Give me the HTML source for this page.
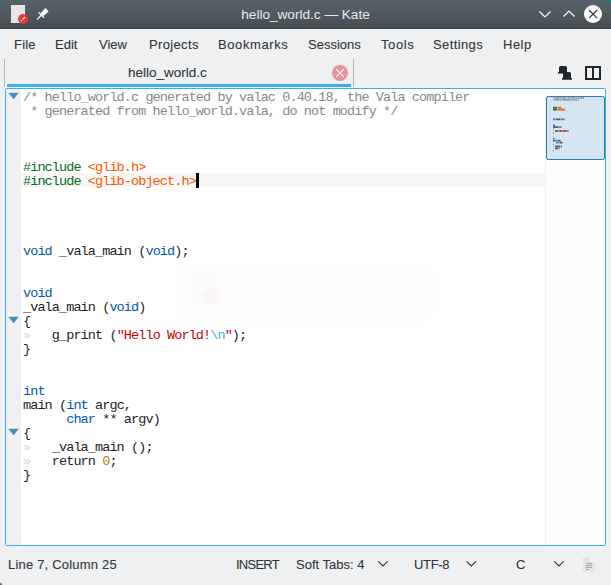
<!DOCTYPE html>
<html><head><meta charset="utf-8">
<style>
*{margin:0;padding:0;box-sizing:border-box}
html,body{width:611px;height:585px;overflow:hidden;background:#eff0f1;font-family:"Liberation Sans",sans-serif;position:relative}
.abs{position:absolute}
#title{left:0;top:0;width:611px;height:29px;background:linear-gradient(#57626a,#505a61 45%,#485157 85%,#464e54);border-bottom:1px solid #3c444a}
#hl{left:0;top:29px;width:611px;height:1px;background:#fafbfb}
#ttext{left:0;top:1px;width:611px;height:28px;line-height:28px;text-align:center;color:#e8eaeb;font-size:13.6px}
.menu{top:30px;height:30px;line-height:30px;font-size:13px;color:#31363b;-webkit-text-stroke:0.1px #31363b}
#tabtext{left:128px;top:60px;height:24px;line-height:26px;font-size:13.5px;color:#31363b;-webkit-text-stroke:0.1px #31363b}
#frame{left:5px;top:88px;width:601px;height:458px;border:1px solid #3daee9;border-radius:2px;background:#fff;overflow:hidden}
#gutter{left:0;top:0;width:15px;height:456px;background:#eff0f1}
#code{left:17px;top:1.5px;font-family:"Liberation Mono",monospace;font-size:13.5px;letter-spacing:-0.9px;line-height:14px;color:#1f1c1b;white-space:pre}
.ln{height:14px}
.cm{color:#898887}.pp{color:#006e28}.inc{color:#ff5500}.ty{color:#0057ae}.st{color:#bf0303}.sc{color:#3daee9}.dv{color:#b08000}.tb{color:#d4d4d4}
#curline{left:15px;top:84px;width:524px;height:14px;background:#f8f7f6}
#cursor{left:190px;top:84px;width:3px;height:15px;background:#000}
.fold{width:0;height:0;border-left:5px solid transparent;border-right:5px solid transparent;border-top:6px solid #2f7fb8}
#mm{left:539px;top:0;width:60px;height:456px;background:#fdfdfd;border-left:1px solid #f0f0f0}
#mmview{left:540px;top:7px;width:59px;height:64px;background:#d6e5f2;border:1px solid #2a7cbc;border-radius:2px}
.st2{top:550px;height:30px;line-height:30px;font-size:13px;color:#31363b;-webkit-text-stroke:0.1px #31363b}
</style></head><body>
<div id="title" class="abs"></div>
<div id="hl" class="abs"></div>
<div class="abs" style="left:-2.5px;top:-2.5px;width:5px;height:5px;border-radius:50%;background:radial-gradient(#0a8580 35%,rgba(10,133,128,0) 70%)"></div>
<div class="abs" style="left:608.5px;top:-2.5px;width:5px;height:5px;border-radius:50%;background:radial-gradient(#0a8580 35%,rgba(10,133,128,0) 70%)"></div>
<div id="ttext" class="abs">hello_world.c — Kate</div>
<svg class="abs" style="left:0;top:0" width="611" height="29" viewBox="0 0 611 29">
<rect x="11" y="5" width="14" height="18" fill="#e4e6e7"/>
<circle cx="23" cy="19" r="5" fill="#ec3b30"/>
<path d="M20.9 21.1 L21.6 20.4 M22.5 19.5 L24.9 17.1" stroke="#fff" stroke-width="1.3"/>
<path d="M37 19.5 L41 15.5" stroke="#fff" stroke-width="1.1"/>
<path d="M39 12.7 L43.6 17.3" stroke="#fff" stroke-width="1.3" stroke-linecap="round"/>
<path d="M40.6 13.4 L44.8 8.6 Q45.4 8 46 8.6 L48.1 10.7 Q48.7 11.3 48.1 11.9 L43.3 16.1 Z" fill="#fff"/>
<path d="M539.5 11.5 L545 17 L550.5 11.5" stroke="#fff" stroke-width="1.2" fill="none"/>
<path d="M563.5 16.5 L569 11 L574.5 16.5" stroke="#fff" stroke-width="1.2" fill="none"/>
<circle cx="593" cy="14" r="9" fill="#fcfcfc"/>
<path d="M589 10 L597.2 18.2 M597.2 10 L589 18.2" stroke="#31363b" stroke-width="1.2"/>
</svg>


<!-- menu -->
<div class="abs menu" style="left:14px;letter-spacing:0.2px">File</div>
<div class="abs menu" style="left:55px">Edit</div>
<div class="abs menu" style="left:99px">View</div>
<div class="abs menu" style="left:149px;letter-spacing:0.35px">Projects</div>
<div class="abs menu" style="left:218px;letter-spacing:0.6px">Bookmarks</div>
<div class="abs menu" style="left:308px">Sessions</div>
<div class="abs menu" style="left:381px;letter-spacing:0.6px">Tools</div>
<div class="abs menu" style="left:433px;letter-spacing:0.38px">Settings</div>
<div class="abs menu" style="left:503px;letter-spacing:0.5px">Help</div>

<!-- tabbar -->
<div class="abs" style="left:4px;top:59px;width:1px;height:28px;background:#b5b7b9"></div>
<div class="abs" style="left:353px;top:59px;width:1px;height:28px;background:#b5b7b9"></div>
<div id="tabtext" class="abs">hello_world.c</div>
<div class="abs" style="left:7px;top:84px;width:344px;height:3px;background:#3daee9"></div>
<svg class="abs" style="left:330px;top:63px" width="20" height="20" viewBox="0 0 20 20"><circle cx="10" cy="10" r="8" fill="#e4959c"/><path d="M6.2 6.2 L13.8 13.8 M13.8 6.2 L6.2 13.8" stroke="#fff" stroke-width="1.1"/></svg>
<svg class="abs" style="left:555px;top:63px" width="50" height="20" viewBox="555 63 50 20">
<path d="M559 73.6 V67.6 Q559 66 560.6 66 H565.4 Q567 66 567 67.6 V72 H564.6 Q563 72 563 73.6 Z M558 72 H563 V73.6 H558 Z M563 78.2 V73.6 Q563 72 564.6 72 H569.4 Q571 72 571 73.6 V78.2 Z M562 78 H572 V79.8 H562 Z" fill="#232629"/>
<path d="M586 67 H600 V79 H586 Z M593 67 V79" stroke="#232629" stroke-width="2" fill="none"/>
</svg>

<div id="frame" class="abs">
  <div id="gutter" class="abs"></div>
  <div id="curline" class="abs"></div>
  <div id="mm" class="abs"></div>
  <div id="mmview" class="abs"></div>
  <div id="code" class="abs"><div class="ln"><span class="cm">/* hello_world.c generated by valac 0.40.18, the Vala compiler</span></div><div class="ln"><span class="cm"> * generated from hello_world.vala, do not modify */</span></div><div class="ln"></div><div class="ln"></div><div class="ln"></div><div class="ln"><span class="pp">#include </span><span class="inc">&lt;glib.h&gt;</span></div><div class="ln"><span class="pp">#include </span><span class="inc">&lt;glib-object.h&gt;</span></div><div class="ln"></div><div class="ln"></div><div class="ln"></div><div class="ln"></div><div class="ln"><span class="ty">void</span> _vala_main (<span class="ty">void</span>);</div><div class="ln"></div><div class="ln"></div><div class="ln"><span class="ty">void</span></div><div class="ln">_vala_main (<span class="ty">void</span>)</div><div class="ln">{</div><div class="ln"><span class="tb">»</span>   g_print (<span class="st">"Hello World!</span><span class="sc">\n</span><span class="st">"</span>);</div><div class="ln">}</div><div class="ln"></div><div class="ln"></div><div class="ln"><span class="ty">int</span></div><div class="ln">main (<span class="ty">int</span> argc,</div><div class="ln">      <span class="ty">char</span> ** argv)</div><div class="ln">{</div><div class="ln"><span class="tb">»</span>   _vala_main ();</div><div class="ln"><span class="tb">»</span>   return <span class="dv">0</span>;</div><div class="ln">}</div></div>
  <div class="abs" style="left:172px;top:176px;width:255px;height:56px;border-radius:5px;background:rgba(40,40,60,0.009)"></div>
  <svg class="abs" style="left:0;top:0" width="601" height="457" viewBox="6 89 601 457"><rect x="193" y="275" width="21" height="29" fill="rgba(0,0,0,0.006)"/><circle cx="212" cy="296" r="8" fill="rgba(237,59,48,0.035)"/></svg>
  <div class="abs" style="left:226px;top:184px;font-family:'Liberation Sans',sans-serif;font-weight:bold;font-size:17.5px;color:#fff;opacity:0.8">hello_world.c — Kate</div>
  <div class="abs" style="left:226px;top:207px;font-family:'Liberation Sans',sans-serif;font-weight:bold;font-size:14px;color:#fff;opacity:0.8">611x585</div>
  <div id="cursor" class="abs"></div>
  <svg class="abs" style="left:0;top:0" width="16" height="457" viewBox="6 89 16 457">
  <path d="M8.4 92.8 H18.7 L13.55 99.3 Z M8.4 316.8 H18.7 L13.55 323.3 Z M8.4 428.8 H18.7 L13.55 435.3 Z" fill="#468bc0"/></svg>
</div>

<div class="abs" style="left:0;top:0;width:611px;height:585px;pointer-events:none"><svg class="abs" style="left:0;top:0" width="611" height="585" viewBox="0 0 611 585"><rect x="553.0" y="97.10" width="1.0" height="1.75" fill="#7d8185" fill-opacity="0.7"/><rect x="554.5" y="97.10" width="6.5" height="1.75" fill="#7d8185" fill-opacity="0.7"/><rect x="561.5" y="97.10" width="4.5" height="1.75" fill="#7d8185" fill-opacity="0.7"/><rect x="566.5" y="97.10" width="1.0" height="1.75" fill="#7d8185" fill-opacity="0.7"/><rect x="568.0" y="97.10" width="2.5" height="1.75" fill="#7d8185" fill-opacity="0.7"/><rect x="571.0" y="97.10" width="4.0" height="1.75" fill="#7d8185" fill-opacity="0.7"/><rect x="575.5" y="97.10" width="1.5" height="1.75" fill="#7d8185" fill-opacity="0.7"/><rect x="577.5" y="97.10" width="2.0" height="1.75" fill="#7d8185" fill-opacity="0.7"/><rect x="580.0" y="97.10" width="4.0" height="1.75" fill="#7d8185" fill-opacity="0.7"/><rect x="553.5" y="99.04" width="0.5" height="1.75" fill="#7d8185" fill-opacity="0.7"/><rect x="554.5" y="99.04" width="4.5" height="1.75" fill="#7d8185" fill-opacity="0.7"/><rect x="559.5" y="99.04" width="2.0" height="1.75" fill="#7d8185" fill-opacity="0.7"/><rect x="562.0" y="99.04" width="8.5" height="1.75" fill="#7d8185" fill-opacity="0.7"/><rect x="571.0" y="99.04" width="1.0" height="1.75" fill="#7d8185" fill-opacity="0.7"/><rect x="572.5" y="99.04" width="1.5" height="1.75" fill="#7d8185" fill-opacity="0.7"/><rect x="574.5" y="99.04" width="3.0" height="1.75" fill="#7d8185" fill-opacity="0.7"/><rect x="578.0" y="99.04" width="1.0" height="1.75" fill="#7d8185" fill-opacity="0.7"/><rect x="553.0" y="106.80" width="4.0" height="1.75" fill="#006e28" fill-opacity="0.9"/><rect x="557.5" y="106.80" width="4.0" height="1.75" fill="#e8571a" fill-opacity="0.9"/><rect x="553.0" y="108.74" width="4.0" height="1.75" fill="#006e28" fill-opacity="0.9"/><rect x="557.5" y="108.74" width="7.5" height="1.75" fill="#e8571a" fill-opacity="0.9"/><rect x="553.0" y="118.44" width="2.0" height="1.75" fill="#2a76c6" fill-opacity="0.9"/><rect x="555.5" y="118.44" width="5.0" height="1.75" fill="#34383c" fill-opacity="0.8"/><rect x="561.0" y="118.44" width="0.5" height="1.75" fill="#34383c" fill-opacity="0.8"/><rect x="561.5" y="118.44" width="2.0" height="1.75" fill="#2a76c6" fill-opacity="0.9"/><rect x="563.5" y="118.44" width="1.0" height="1.75" fill="#34383c" fill-opacity="0.8"/><rect x="553.0" y="124.26" width="2.0" height="1.75" fill="#2a76c6" fill-opacity="0.9"/><rect x="553.0" y="126.20" width="5.0" height="1.75" fill="#34383c" fill-opacity="0.8"/><rect x="558.5" y="126.20" width="0.5" height="1.75" fill="#34383c" fill-opacity="0.8"/><rect x="559.0" y="126.20" width="2.0" height="1.75" fill="#2a76c6" fill-opacity="0.9"/><rect x="561.0" y="126.20" width="0.5" height="1.75" fill="#34383c" fill-opacity="0.8"/><rect x="553.0" y="128.14" width="0.5" height="1.75" fill="#34383c" fill-opacity="0.8"/><rect x="553.0" y="130.08" width="0.5" height="1.75" fill="#b8bcc0" fill-opacity="0.5"/><rect x="555.0" y="130.08" width="3.5" height="1.75" fill="#34383c" fill-opacity="0.8"/><rect x="559.0" y="130.08" width="0.5" height="1.75" fill="#34383c" fill-opacity="0.8"/><rect x="559.5" y="130.08" width="3.0" height="1.75" fill="#c0181e" fill-opacity="0.9"/><rect x="563.0" y="130.08" width="3.0" height="1.75" fill="#c0181e" fill-opacity="0.9"/><rect x="566.0" y="130.08" width="1.0" height="1.75" fill="#3daee9" fill-opacity="0.9"/><rect x="567.0" y="130.08" width="0.5" height="1.75" fill="#c0181e" fill-opacity="0.9"/><rect x="567.5" y="130.08" width="1.0" height="1.75" fill="#34383c" fill-opacity="0.8"/><rect x="553.0" y="132.02" width="0.5" height="1.75" fill="#34383c" fill-opacity="0.8"/><rect x="553.0" y="137.84" width="1.5" height="1.75" fill="#2a76c6" fill-opacity="0.9"/><rect x="553.0" y="139.78" width="2.0" height="1.75" fill="#34383c" fill-opacity="0.8"/><rect x="555.5" y="139.78" width="0.5" height="1.75" fill="#34383c" fill-opacity="0.8"/><rect x="556.0" y="139.78" width="1.5" height="1.75" fill="#2a76c6" fill-opacity="0.9"/><rect x="558.0" y="139.78" width="2.5" height="1.75" fill="#34383c" fill-opacity="0.8"/><rect x="556.0" y="141.72" width="2.0" height="1.75" fill="#2a76c6" fill-opacity="0.9"/><rect x="558.5" y="141.72" width="1.0" height="1.75" fill="#34383c" fill-opacity="0.8"/><rect x="560.0" y="141.72" width="2.5" height="1.75" fill="#34383c" fill-opacity="0.8"/><rect x="553.0" y="143.66" width="0.5" height="1.75" fill="#34383c" fill-opacity="0.8"/><rect x="553.0" y="145.60" width="0.5" height="1.75" fill="#b8bcc0" fill-opacity="0.5"/><rect x="555.0" y="145.60" width="5.0" height="1.75" fill="#34383c" fill-opacity="0.8"/><rect x="560.5" y="145.60" width="1.5" height="1.75" fill="#34383c" fill-opacity="0.8"/><rect x="553.0" y="147.54" width="0.5" height="1.75" fill="#b8bcc0" fill-opacity="0.5"/><rect x="555.0" y="147.54" width="3.0" height="1.75" fill="#34383c" fill-opacity="0.8"/><rect x="558.5" y="147.54" width="0.5" height="1.75" fill="#b08000" fill-opacity="0.9"/><rect x="559.0" y="147.54" width="0.5" height="1.75" fill="#34383c" fill-opacity="0.8"/><rect x="553.0" y="149.48" width="0.5" height="1.75" fill="#34383c" fill-opacity="0.8"/></svg></div>
<!-- status bar -->
<div class="abs st2" style="left:8px;letter-spacing:0.2px">Line 7, Column 25</div>
<div class="abs st2" style="left:236px;letter-spacing:-0.75px">INSERT</div>
<div class="abs st2" style="left:296px">Soft Tabs: 4</div>
<div class="abs st2" style="left:414px;letter-spacing:-0.35px">UTF-8</div>
<div class="abs st2" style="left:516px">C</div>
<svg class="abs" style="left:0;top:540px" width="611" height="45" viewBox="0 540 611 45">
<path d="M378.3 561.3 L383 566 L387.7 561.3" stroke="#31363b" stroke-width="1.2" fill="none"/>
<path d="M466.6 561.3 L471.3 566 L476 561.3" stroke="#31363b" stroke-width="1.2" fill="none"/>
<path d="M554.3 561.3 L559 566 L563.7 561.3" stroke="#31363b" stroke-width="1.2" fill="none"/>
<path d="M583 557 H590 L595 562 V571.5 H583 Z" fill="#e3e4e6"/>
<path d="M590 557 V562 H595 Z" fill="#f4f5f6"/>
<path d="M586 563.3 H592 M586 565.3 H592 M586 567.4 H592 M586 569.5 H589" stroke="#9a9c9e" stroke-width="0.9"/>
</svg>
<div class="abs" style="left:-3px;top:582px;width:6px;height:6px;border-radius:50%;background:radial-gradient(rgba(40,40,40,0.7) 30%,rgba(40,40,40,0) 70%)"></div>
</body></html>
